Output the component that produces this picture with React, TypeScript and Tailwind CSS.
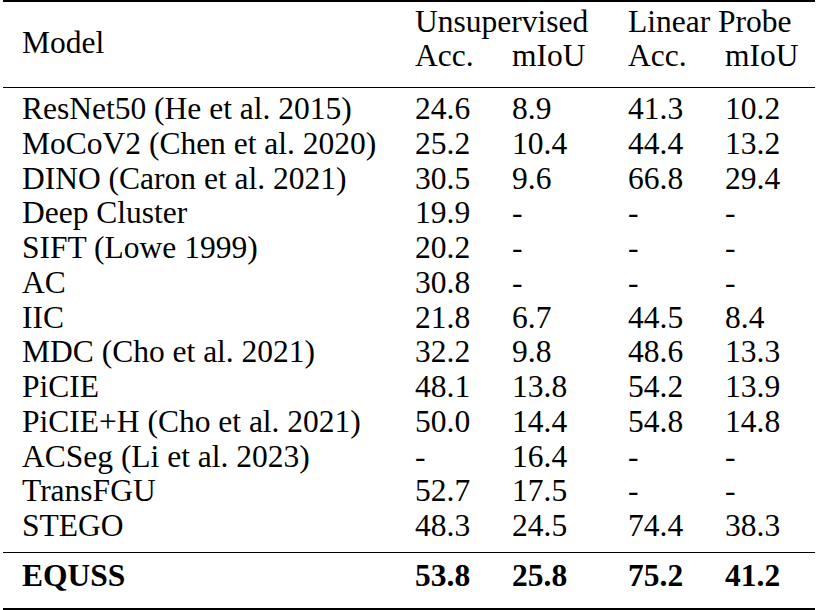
const rows: [string, string, string, string, string][] = [
  ['ResNet50 (He et al. 2015)', '24.6', '8.9', '41.3', '10.2'],
  ['MoCoV2 (Chen et al. 2020)', '25.2', '10.4', '44.4', '13.2'],
  ['DINO (Caron et al. 2021)', '30.5', '9.6', '66.8', '29.4'],
  ['Deep Cluster', '19.9', '-', '-', '-'],
  ['SIFT (Lowe 1999)', '20.2', '-', '-', '-'],
  ['AC', '30.8', '-', '-', '-'],
  ['IIC', '21.8', '6.7', '44.5', '8.4'],
  ['MDC (Cho et al. 2021)', '32.2', '9.8', '48.6', '13.3'],
  ['PiCIE', '48.1', '13.8', '54.2', '13.9'],
  ['PiCIE+H (Cho et al. 2021)', '50.0', '14.4', '54.8', '14.8'],
  ['ACSeg (Li et al. 2023)', '-', '16.4', '-', '-'],
  ['TransFGU', '52.7', '17.5', '-', '-'],
  ['STEGO', '48.3', '24.5', '74.4', '38.3'],
];

const cols = 'grid grid-cols-[393px_97px_116px_97px_1fr] pl-[19px]';

export default function App() {
  return (
    <div className="w-[818px] h-[610px] bg-white text-black font-['Liberation_Serif',serif] text-[31.5px] leading-[34.75px]">
      <div className="mx-[3px] border-t-2 border-b-[3px] border-black">
        {/* header */}
        <div className={`${cols} pt-[3px] pb-[13px] border-b-[1.5px] border-black`}>
          <div className="row-span-2 pt-[21px] whitespace-nowrap">Model</div>
          <div className="col-span-2 whitespace-nowrap">Unsupervised</div>
          <div className="col-span-2 whitespace-nowrap">Linear Probe</div>
          <div className="-mt-[1px]">Acc.</div>
          <div className="-mt-[1px]">mIoU</div>
          <div className="-mt-[1px]">Acc.</div>
          <div className="-mt-[1px]">mIoU</div>
        </div>
        {/* body */}
        <div className="pt-[4.5px] pb-[8px] border-b-[1.5px] border-black">
          {rows.map((r) => (
            <div key={r[0]} className={cols}>
              {r.map((c, i) => (
                <div key={i} className="whitespace-nowrap">{c}</div>
              ))}
            </div>
          ))}
        </div>
        {/* ours */}
        <div className={`${cols} pt-[6px] pb-[14px] font-bold`}>
          <div>EQUSS</div>
          <div>53.8</div>
          <div>25.8</div>
          <div>75.2</div>
          <div>41.2</div>
        </div>
      </div>
    </div>
  );
}
